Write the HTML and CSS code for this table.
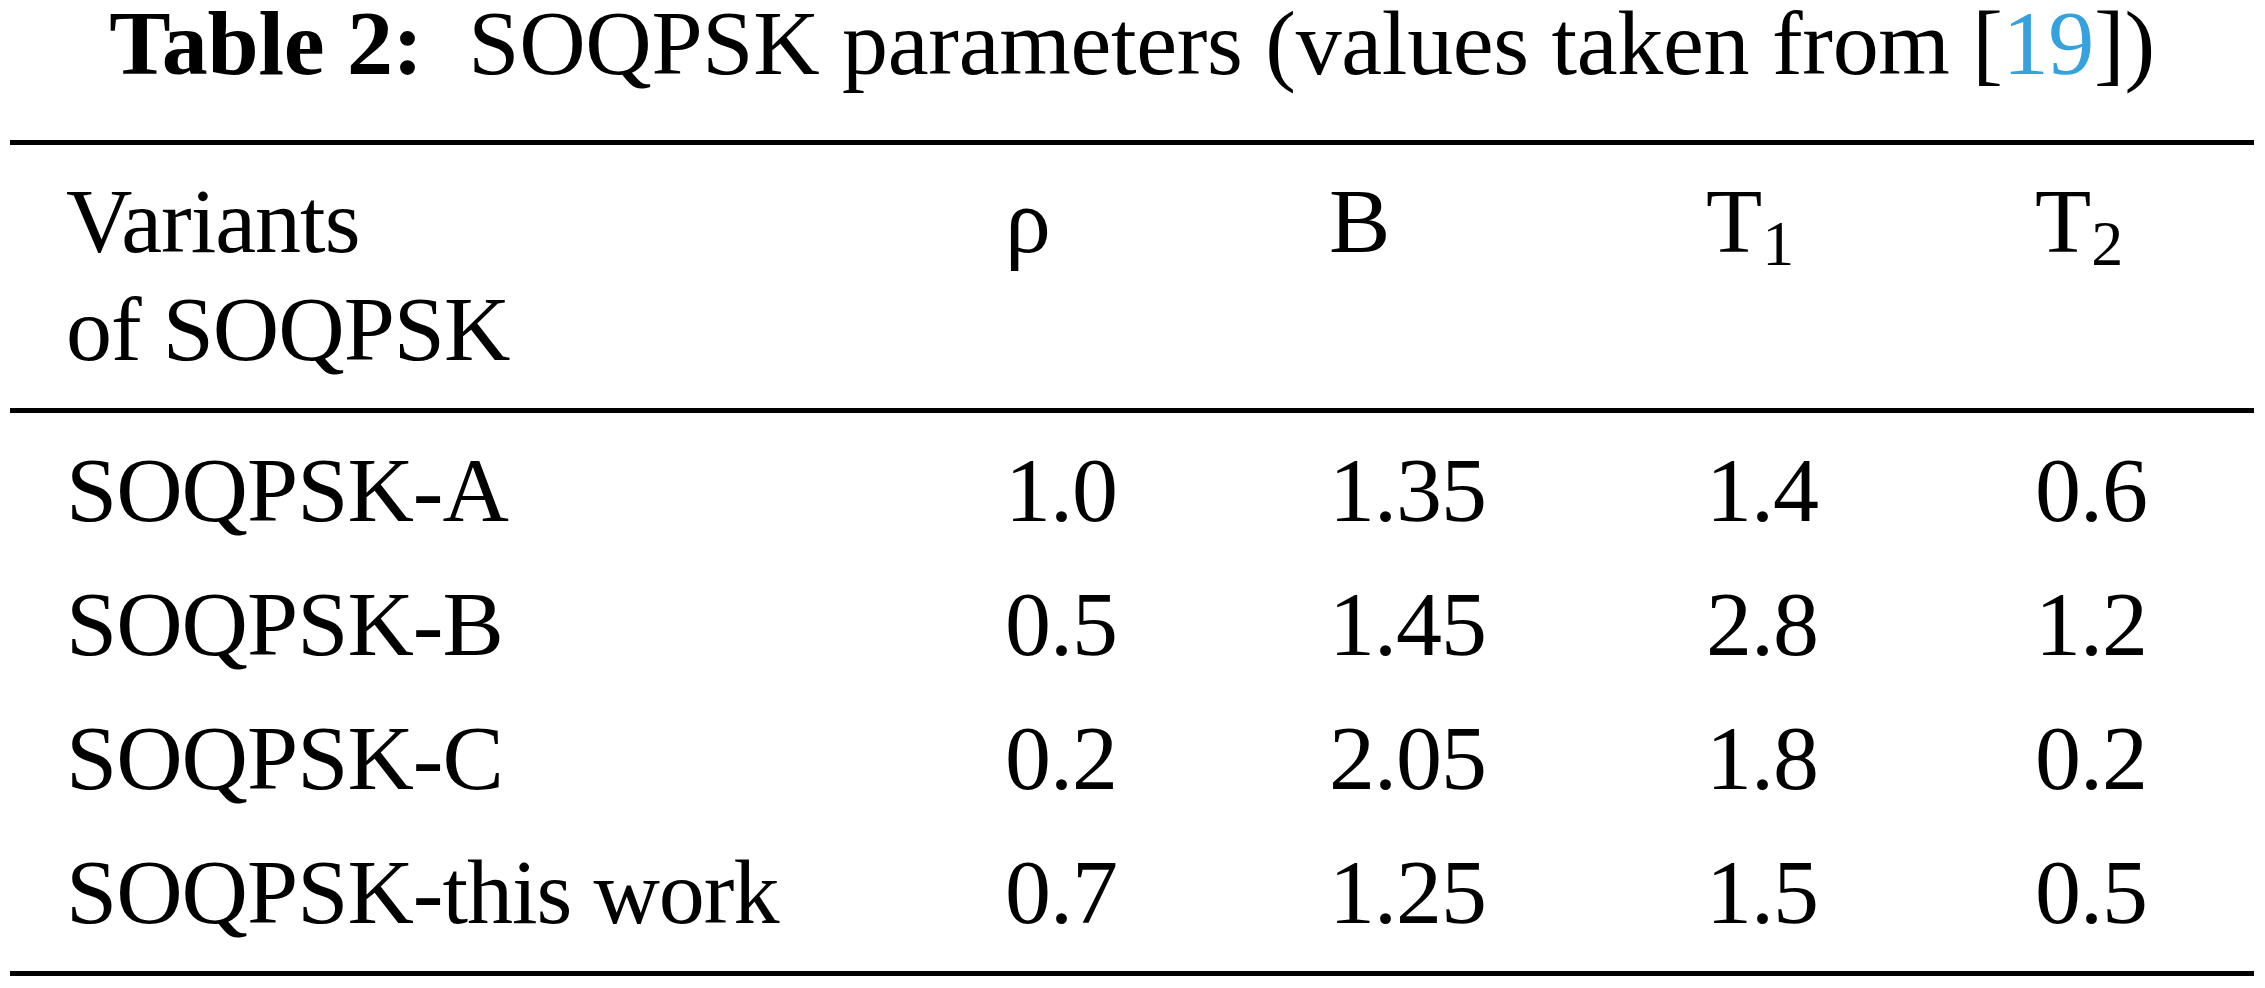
FILE: index.html
```html
<!DOCTYPE html>
<html lang="en">
<head>
    <meta charset="UTF-8">
    <title>Table 2: SOQPSK parameters</title>
    <link rel="stylesheet" href="styles.css">
</head>
<body>
    <div class="caption"><strong>Table 2:</strong>&nbsp; SOQPSK parameters (values taken from [<a class="ref" href="#ref19">19</a>])</div>
    <table class="params">
        <colgroup>
            <col class="col-name">
            <col class="col-rho">
            <col class="col-b">
            <col class="col-t1">
            <col class="col-t2">
        </colgroup>
        <thead>
            <tr>
                <th>Variants<br>of SOQPSK</th>
                <th>ρ</th>
                <th>B</th>
                <th>T<sub>1</sub></th>
                <th>T<sub>2</sub></th>
            </tr>
        </thead>
        <tbody>
            <tr>
                <td>SOQPSK-A</td>
                <td>1.0</td>
                <td>1.35</td>
                <td>1.4</td>
                <td>0.6</td>
            </tr>
            <tr>
                <td>SOQPSK-B</td>
                <td>0.5</td>
                <td>1.45</td>
                <td>2.8</td>
                <td>1.2</td>
            </tr>
            <tr>
                <td>SOQPSK-C</td>
                <td>0.2</td>
                <td>2.05</td>
                <td>1.8</td>
                <td>0.2</td>
            </tr>
            <tr>
                <td>SOQPSK-this work</td>
                <td>0.7</td>
                <td>1.25</td>
                <td>1.5</td>
                <td>0.5</td>
            </tr>
        </tbody>
    </table>
</body>
</html>
```

FILE: styles.css
```css
body {
    margin: 0 11px 0 10px;
    background: #fff;
    color: #000;
    font-family: "Liberation Serif", "Times New Roman", serif;
    font-size: 92px;
}
.caption {
    text-align: center;
    line-height: 86px;
    margin-bottom: 54px;
    letter-spacing: -0.3px;
}
.caption strong {
    font-weight: bold;
}
.ref {
    color: #35a2de;
    text-decoration: none;
}
.params {
    width: 100%;
    border-collapse: separate;
    border-spacing: 0;
    border-top: 5px solid #000;
    border-bottom: 5px solid #000;
    table-layout: fixed;
}
.col-name {
    width: 995px;
}
.col-rho {
    width: 324px;
}
.col-b {
    width: 377px;
}
.col-t1 {
    width: 329px;
}
.params th,
.params td {
    text-align: left;
    font-weight: normal;
    padding: 0;
    vertical-align: top;
    white-space: nowrap;
    letter-spacing: -1px;
}
.params th:first-child,
.params td:first-child {
    padding-left: 56px;
}
.params th {
    line-height: 108px;
    padding-top: 22px;
    padding-bottom: 25px;
    border-bottom: 5px solid #000;
}
.params td {
    line-height: 134px;
}
.params tbody tr:first-child td {
    padding-top: 10px;
}
.params tbody tr:last-child td {
    padding-bottom: 12px;
}
.params sub {
    font-size: 64px;
    line-height: 0;
    vertical-align: -13px;
    margin-left: 1px;
}
```
